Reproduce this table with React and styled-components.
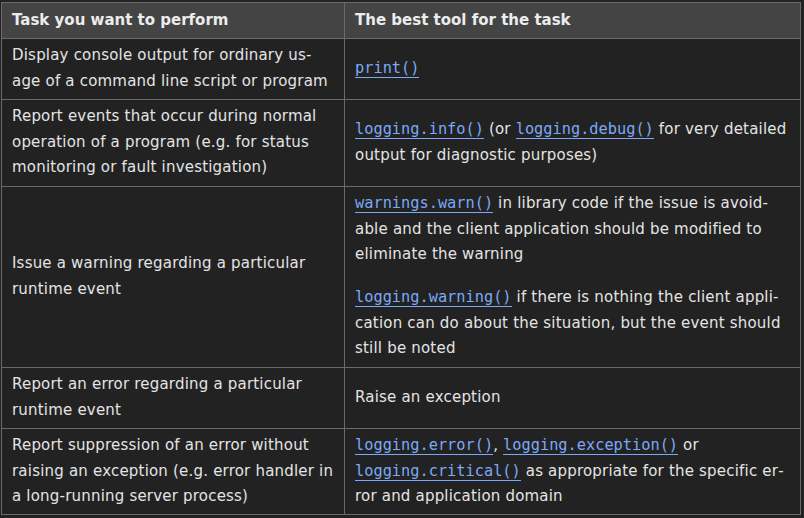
import React from "react";
import styled, { createGlobalStyle } from "styled-components";

const GlobalStyle = createGlobalStyle`
  html, body {
    margin: 0;
    padding: 0;
    background: #222222;
  }
  body {
    font-family: "DejaVu Sans", "Noto Sans", sans-serif;
    color: #e4e4e4;
  }
`;

const Page = styled.div`
  padding: 2px 0 0 1px;
`;

const Table = styled.table`
  width: 800px;
  border-collapse: collapse;
  table-layout: fixed;
  font-size: 15px;
  line-height: 25.6px;
  border: 1px solid #6a6a6a;
`;

const HeadCell = styled.th`
  background: #444444;
  color: #ececec;
  font-weight: 700;
  text-align: left;
  padding: 4.5px 10px;
  border: 1px solid #6a6a6a;
  width: ${(p) => p.$width || "auto"};
`;

const Cell = styled.td`
  background: #222222;
  padding: 4.5px 10px;
  border: 1px solid #6a6a6a;
  vertical-align: middle;
  letter-spacing: 0.2px;
`;

const Para = styled.p`
  margin: 0;
  & + & {
    margin-top: 17.4px;
  }
`;

const Code = styled.a`
  font-family: "DejaVu Sans Mono", "Liberation Mono", monospace;
  font-size: 15.3px;
  letter-spacing: 0;
  color: #7aa9f7;
  text-decoration: none;
  border-bottom: 1px solid #7aa9f7;
`;

const rows = [
  {
    task: "Display console output for ordinary us\u00ADage of a command line script or program",
    tool: [[<Code key="a">print()</Code>]],
  },
  {
    task: "Report events that occur during normal operation of a program (e.g. for status monitoring or fault investigation)",
    tool: [
      [
        <Code key="a">logging.info()</Code>,
        " (or ",
        <Code key="b">logging.debug()</Code>,
        " for very detailed output for diagnostic purposes)",
      ],
    ],
  },
  {
    task: "Issue a warning regarding a particular runtime event",
    tool: [
      [
        <Code key="a">warnings.warn()</Code>,
        " in library code if the issue is avoid\u00ADable and the client application should be modified to eliminate the warning",
      ],
      [
        <Code key="a">logging.warning()</Code>,
        " if there is nothing the client appli\u00ADcation can do about the situation, but the event should still be noted",
      ],
    ],
  },
  {
    task: "Report an error regarding a particular runtime event",
    tool: [["Raise an exception"]],
  },
  {
    task: "Report suppression of an error without raising an exception (e.g. error handler in a long\u2011running server process)",
    tool: [
      [
        <Code key="a">logging.error()</Code>,
        ", ",
        <Code key="b">logging.exception()</Code>,
        " or ",
        <Code key="c">logging.critical()</Code>,
        " as appropriate for the specific er\u00ADror and application domain",
      ],
    ],
  },
];

export default function App() {
  return (
    <>
      <GlobalStyle />
      <Page>
        <Table>
          <thead>
            <tr>
              <HeadCell $width="322px">Task you want to perform</HeadCell>
              <HeadCell>The best tool for the task</HeadCell>
            </tr>
          </thead>
          <tbody>
            {rows.map((row, i) => (
              <tr key={i}>
                <Cell>{row.task}</Cell>
                <Cell>
                  {row.tool.map((p, j) => (
                    <Para key={j}>{p}</Para>
                  ))}
                </Cell>
              </tr>
            ))}
          </tbody>
        </Table>
      </Page>
    </>
  );
}
